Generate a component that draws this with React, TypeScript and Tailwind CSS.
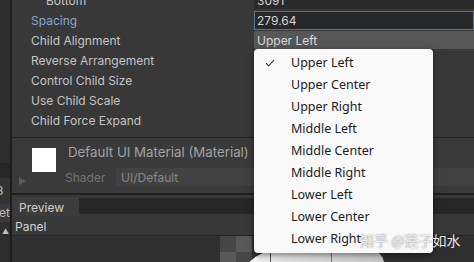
const menuItems = [
  'Upper Left',
  'Upper Center',
  'Upper Right',
  'Middle Left',
  'Middle Center',
  'Middle Right',
  'Lower Left',
  'Lower Center',
  'Lower Right',
]

function Row({
  label,
  indent,
  labelClass,
  children,
}: {
  label: string
  indent?: boolean
  labelClass?: string
  children?: React.ReactNode
}) {
  return (
    <div className="flex h-[20px] items-center">
      <div
        className={`w-[242px] shrink-0 pt-[2px] text-[12px] ${indent ? 'pl-[34px]' : 'pl-[19px]'} ${labelClass ?? 'text-[#c4c4c4]'}`}
      >
        {label}
      </div>
      {children}
    </div>
  )
}

export default function App() {
  return (
    <div className="relative flex h-[262px] w-[474px] overflow-hidden bg-[#383838] font-['Inter',sans-serif]">
      {/* left neighbour panel */}
      <div className="flex w-[12px] shrink-0 flex-col overflow-hidden border-r-2 border-[#1d1d1d] bg-[#2e2e2e] text-[12px] text-[#bdbdbd]">
        <div className="h-[163px] shrink-0" />
        <div className="h-[15px] shrink-0 bg-[#272727]" />
        <div className="-ml-[4px] h-[26px] shrink-0 bg-[#333] leading-[26px]">8</div>
        <div className="-ml-[1px] h-[18px] shrink-0 bg-[#3a3a3a] leading-[18px]">et</div>
        <div className="h-[20px] shrink-0 pl-[2px] text-[7px] leading-[20px]">▲</div>
        <div className="flex-1" />
      </div>

      {/* inspector */}
      <div className="flex min-w-0 flex-1 flex-col">
        <div className="-mt-[10px] flex flex-col">
          <Row label="Bottom" indent>
            <div className="flex h-[18px] flex-1 items-center bg-[#2a2a2a] px-[3px] pt-[2px] text-[12px] text-[#cfcfcf]">
              3091
            </div>
          </Row>
          <Row label="Spacing" labelClass="text-[#84a5db]">
            <div className="flex h-[19px] flex-1 items-center border border-[#5a7594] bg-[#262728] px-[2px] pt-[2px] text-[12px] text-[#d4d4d4]">
              279.64
            </div>
          </Row>
          <Row label="Child Alignment">
            <div className="flex h-[18px] flex-1 items-center rounded-l-[2px] bg-[#575757] px-[3px] pt-[2px] text-[12px] text-[#dadada]">
              Upper Left
            </div>
          </Row>
          <Row label="Reverse Arrangement" />
          <Row label="Control Child Size" />
          <Row label="Use Child Scale" />
          <Row label="Child Force Expand" />
        </div>
        <div className="h-[7px] shrink-0" />

        {/* material */}
        <div className="flex h-[56px] shrink-0 border-t border-[#242424] bg-[#3a3a3a]">
          <div className="flex w-[53px] shrink-0 flex-col">
            <div className="ml-[20px] mt-[10px] h-[24px] w-[24px] bg-white" />
            <div className="ml-[7px] mt-[5px] h-0 w-0 border-y-[4px] border-l-[7px] border-y-transparent border-l-[#5c5c5c]" />
          </div>
          <div className="flex flex-1 flex-col">
            <div className="mt-[5px] flex h-[18px] items-center pl-[3px] pt-[2px] text-[13.3px] text-[#a2a2a2]">
              Default UI Material (Material)
            </div>
            <div className="mt-[7px] flex h-[18px] items-center">
              <div className="w-[51px] shrink-0 pt-[2px] text-[12px] text-[#727272]">Shader</div>
              <div className="flex h-[18px] flex-1 items-center bg-[#424242] px-[5px] pt-[2px] text-[12px] text-[#878787]">
                UI/Default
              </div>
            </div>
          </div>
        </div>

        {/* preview */}
        <div className="h-[2px] shrink-0 bg-[#1f1f1f]" />
        <div className="flex h-[21px] shrink-0 items-end bg-[#383838]">
          <div className="flex h-[19px] w-[67px] items-center bg-[#3c3c3c] pl-[7px] pt-[2px] text-[12px] text-[#cfcfcf]">
            Preview
          </div>
          <div className="mb-[2px] h-[16px] flex-1 bg-[#272727]" />
        </div>
        <div className="flex h-[20px] shrink-0 items-center border-b border-[#242424] pl-[3px] pt-[2px] text-[12px] text-[#d2d2d2]">
          Panel
        </div>
        <div className="relative flex-1 bg-[#303030]">
          <div className="absolute left-[208px] top-0 grid grid-cols-2">
            <div className="h-[16px] w-[16px] bg-[#474747]" />
            <div className="h-[16px] w-[16px] bg-[#595959]" />
            <div className="h-[16px] w-[16px] bg-[#595959]" />
            <div className="h-[16px] w-[16px] bg-[#474747]" />
          </div>
          <div className="absolute left-[226px] top-[14px] h-[40px] w-[146px] rounded-tl-[40px] rounded-tr-[14px] bg-[linear-gradient(90deg,#ffffff,#e4e4e4_35%,#c9c9c9)]" />
          <div className="absolute left-[258px] top-[16px] h-[20px] w-px bg-[#555]" />
          <div className="absolute left-[319px] top-[16px] h-[20px] w-px bg-[#777]" />
        </div>
      </div>

      {/* dropdown menu */}
      <div className="absolute left-[254px] top-[49px] w-[179px] rounded-[4px] bg-[#f9f9f9] pb-[3px] pt-[3px] font-['Noto_Sans',sans-serif] text-[12.5px] text-[#1b1b1b] shadow-[0_2px_7px_rgba(0,0,0,0.5)]">
        {menuItems.map((item, i) => (
          <div key={item} className="relative flex h-[22px] items-center pl-[37px]">
            {i === 0 && (
              <svg className="absolute left-[11px] top-[7px]" width="10" height="8" viewBox="0 0 10 8">
                <path d="M1 4.2 L3.6 6.8 L9 1.2" fill="none" stroke="#333" strokeWidth="1.1" />
              </svg>
            )}
            {item}
          </div>
        ))}
      </div>

      {/* watermark */}
      <div className="absolute left-[360px] top-[230px] font-['Noto_Sans_CJK_SC',sans-serif] text-[14px] leading-[20px] text-[#ececec] [text-shadow:0_0_1.5px_rgba(0,0,0,0.55)]">
        知乎 @莲子如水
      </div>
    </div>
  )
}
